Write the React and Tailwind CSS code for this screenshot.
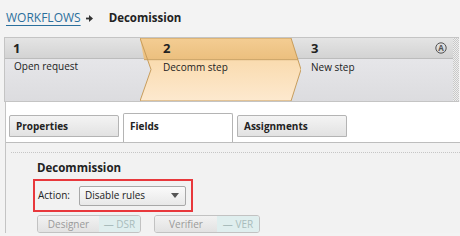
import React from "react";

const font = { fontFamily: '"Open Sans", "Noto Sans", sans-serif' };

function Chevron({ fillId, headId }) {
  return (
    <svg className="absolute inset-0 h-full w-full" viewBox="0 0 161 64" preserveAspectRatio="none">
      <defs>
        <linearGradient id={headId} x1="0" y1="0" x2="0" y2="1">
          <stop offset="0" stopColor="#f4cd93" />
          <stop offset="1" stopColor="#ebbf7e" />
        </linearGradient>
        <linearGradient id={fillId} x1="0" y1="0" x2="0" y2="1">
          <stop offset="0" stopColor="#f8d49e" />
          <stop offset="1" stopColor="#fde9cf" />
        </linearGradient>
      </defs>
      <polygon points="0,0 151,0 161,32 151,64 0,64 11,32" fill={`url(#${fillId})`} />
      <polygon points="0,0 151,0 157.9,22 4.1,22" fill={`url(#${headId})`} />
      <line x1="4" y1="22" x2="158" y2="22" stroke="#c9a266" strokeWidth="1" />
      <polyline points="0,0 151,0 161,32 151,64" fill="none" stroke="#c79c5c" strokeWidth="1" />
      <polyline points="0,0 11,32 0,64 151,64" fill="none" stroke="#c79c5c" strokeWidth="1" />
    </svg>
  );
}

export default function App() {
  return (
    <div className="h-[236px] w-[460px] overflow-hidden bg-[#f3f3f3] text-[#222]" style={font}>
      {/* breadcrumb */}
      <div className="flex h-[37px] items-center pl-[6px] pb-[1px]">
        <span className="text-[12px] leading-none text-[#2b6f9c] underline underline-offset-[3px] decoration-[#2b6f9c]">WORKFLOWS</span>
        <svg className="ml-[5px]" width="7" height="7" viewBox="0 0 7 7">
          <rect x="0" y="2.6" width="4" height="1.8" fill="#333" />
          <polygon points="3,0 7,3.5 3,7" fill="#333" />
        </svg>
        <span className="ml-[16px] text-[11.5px] font-bold text-[#222]">Decomission</span>
      </div>

      {/* step bar */}
      <div className="flex h-[65px]">
        <div className="ml-[4px] flex w-[449px] border-y border-l border-[#c4c4c4]">
          <div className="flex w-[146px] flex-col">
            <div className="flex h-[21px] items-center border-b border-[#bcbcbc] bg-gradient-to-b from-[#e4e4e4] to-[#d3d3d3] pl-[8px]">
              <span className="text-[13px] font-bold leading-none">1</span>
            </div>
            <div className="flex-1 bg-gradient-to-b from-[#e6e6e9] to-[#dcdcdf] pl-[9px] pt-[1px] text-[10px] leading-[12px]">
              Open request
            </div>
          </div>
          <div className="relative z-10 -ml-[11px] -mr-[10px] flex w-[161px] flex-col">
            <Chevron fillId="s2fill" headId="s2head" />
            <div className="relative flex h-[21px] items-center pl-[23px]">
              <span className="text-[13px] font-bold leading-none">2</span>
            </div>
            <div className="relative flex-1 pl-[23px] pt-[2px] text-[10px] leading-[12px]">Decomm step</div>
          </div>
          <div className="flex flex-1 flex-col">
            <div className="flex h-[21px] items-center justify-between border-b border-[#bcbcbc] bg-gradient-to-b from-[#e4e4e4] to-[#d3d3d3] pl-[20px] pr-[6px]">
              <span className="text-[13px] font-bold leading-none">3</span>
              <svg width="12" height="12" viewBox="0 0 12 12">
                <circle cx="6" cy="6" r="5.2" fill="none" stroke="#555" strokeWidth="1" />
                <text x="6" y="9" textAnchor="middle" fontSize="8" fontWeight="bold" fill="#555" fontFamily="Open Sans, sans-serif">A</text>
              </svg>
            </div>
            <div className="flex-1 bg-gradient-to-b from-[#e6e6e9] to-[#dcdcdf] pl-[20px] pt-[2px] text-[10px] leading-[12px]">
              New step
            </div>
          </div>
        </div>
        <div className="w-[6px] border-y border-[#c4c4c4] bg-[repeating-conic-gradient(#c8c8c8_0_25%,#eeeeee_0_50%)] bg-[length:2px_2px]" />
      </div>

      {/* panel */}
      <div className="ml-[5px] border-l border-[#c4c4c4]">
        <div className="flex h-[41px] items-end gap-[4px] border-b border-[#bdbdbd] bg-white pl-[3px]">
          <div className="mb-[5px] flex h-[22px] w-[110px] items-center rounded-t-[2px] border border-[#b4b4b4] bg-gradient-to-b from-[#f4f4f4] to-[#e2e2e2] pl-[6px] text-[10px] font-bold">
            Properties
          </div>
          <div className="flex h-[29px] w-[110px] items-start rounded-t-[2px] border border-b-0 border-[#b4b4b4] bg-white pl-[6px] pt-[5px] text-[10px] font-bold">
            Fields
          </div>
          <div className="mb-[5px] flex h-[22px] w-[110px] items-center rounded-t-[2px] border border-[#b4b4b4] bg-gradient-to-b from-[#f4f4f4] to-[#e2e2e2] pl-[6px] text-[10px] font-bold">
            Assignments
          </div>
        </div>

        <div className="bg-[#f2f2f2] pl-[5px] pt-[9px]">
          <div className="border-t border-dotted border-[#c6c6c6]" />
          <div className="pl-[26px] pt-[6px]">
            <div className="text-[11.5px] font-bold leading-[18px]">Decommission</div>
            <div className="-ml-[4px] mt-[2px] flex h-[33px] w-[160px] items-center border-2 border-[#e8383c] pl-[3px]">
              <span className="text-[10px]">Action:</span>
              <div className="ml-[9px] flex h-[20px] w-[107px] items-center justify-between rounded-[2px] border border-[#a8a8a8] bg-gradient-to-b from-[#fafafa] to-[#e8e8e8] pl-[5px] pr-[6px] text-[10px]">
                <span>Disable rules</span>
                <svg width="8" height="5" viewBox="0 0 8 5">
                  <polygon points="0,0 8,0 4,5" fill="#555" />
                </svg>
              </div>
            </div>
            <div className="mt-[3px] flex gap-[13px] text-[10px]">
              <div className="flex h-[18px] overflow-hidden rounded-[3px] border border-[#c2c2c2]">
                <div className="flex w-[61px] items-center justify-center bg-gradient-to-b from-[#f2f2f2] to-[#e2e2e2] text-[#9a9a9a]">Designer</div>
                <div className="flex w-[41px] items-center justify-center bg-[#dfeeee] text-[#a9bcbc]">&#x2014; DSR</div>
              </div>
              <div className="flex h-[18px] overflow-hidden rounded-[3px] border border-[#c2c2c2]">
                <div className="flex w-[62px] items-center justify-center bg-gradient-to-b from-[#f2f2f2] to-[#e2e2e2] text-[#9a9a9a]">Verifier</div>
                <div className="flex w-[42px] items-center justify-center bg-[#dfeeee] text-[#a9bcbc]">&#x2014; VER</div>
              </div>
            </div>
          </div>
        </div>
      </div>
    </div>
  );
}
